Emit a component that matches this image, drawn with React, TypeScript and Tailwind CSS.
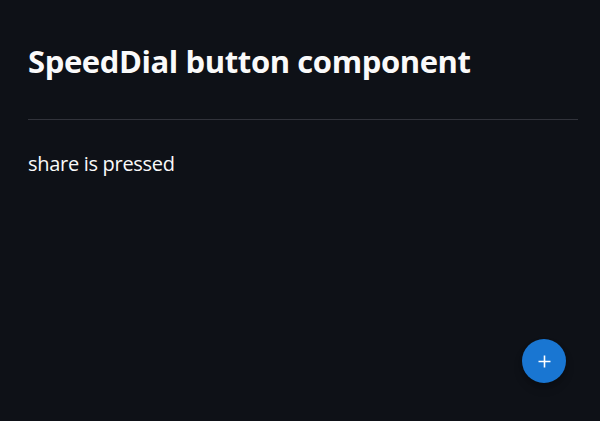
import React from 'react';

export default function App() {
    return (
        <div className="relative h-[421px] w-full overflow-hidden bg-[#0e1117] text-[#fafafa]" style={{ fontFamily: '"Open Sans", "Noto Sans", sans-serif' }}>
            <div className="flex flex-col pl-[28px] pr-[22px]">
                <h1 className="pt-[39px] pb-[36px] text-[31px] font-bold leading-[44px] tracking-[-0.4px]">SpeedDial button component</h1>
                <hr className="border-0 border-t border-[#31333b]" />
                <p className="pt-[30px] text-[20px] leading-[28px] tracking-[-0.3px]">share is pressed</p>
            </div>

            {/* floating speed dial */}
            <button className="absolute right-[34px] bottom-[38px] flex h-[44px] w-[44px] items-center justify-center rounded-full bg-[#1976d2] shadow-[0_3px_5px_-1px_rgba(0,0,0,0.2),0_6px_10px_0_rgba(0,0,0,0.14)]">
                <svg width="13" height="13" viewBox="0 0 13 13" fill="none" stroke="#ffffff" strokeWidth="1.6">
                    <path d="M6.5 0.5v12M0.5 6.5h12" />
                </svg>
            </button>
        </div>
    );
}
